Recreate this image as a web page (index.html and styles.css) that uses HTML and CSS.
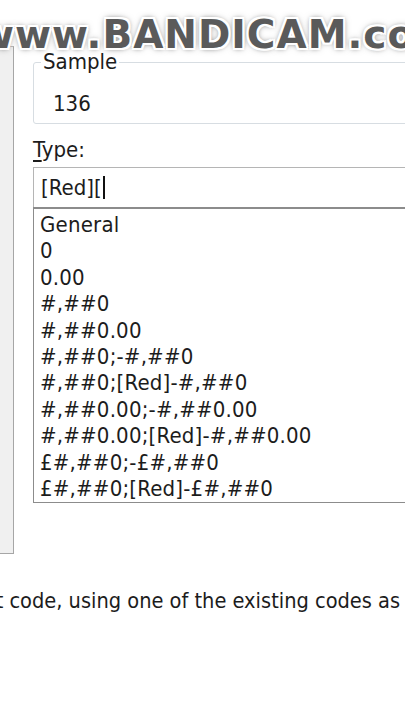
FILE: index.html
```html
<!DOCTYPE html>
<html>
<head>
<meta charset="utf-8">
<link rel="stylesheet" href="styles.css">
</head>
<body>
<div class="screen">
  <div class="dialog">
    <div class="side"></div>
    <div class="main">
      <fieldset class="sample">
        <legend>Sample</legend>
        <div class="sample-value">136</div>
      </fieldset>
      <div class="type-label"><u>T</u>ype:</div>
      <div class="type-input">[Red][<span class="caret"></span></div>
      <ul class="type-list">
        <li>General</li>
        <li>0</li>
        <li>0.00</li>
        <li>#,##0</li>
        <li>#,##0.00</li>
        <li>#,##0;-#,##0</li>
        <li>#,##0;[Red]-#,##0</li>
        <li>#,##0.00;-#,##0.00</li>
        <li>#,##0.00;[Red]-#,##0.00</li>
        <li>£#,##0;-£#,##0</li>
        <li>£#,##0;[Red]-£#,##0</li>
      </ul>
    </div>
  </div>
  <p class="hint">Type the number format code, using one of the existing codes as a starting point.</p>
  <div class="watermark">www.BANDICAM.com</div>
</div>
</body>
</html>
```
FILE: styles.css
```css
html, body {
  margin: 0;
  padding: 0;
  background: #ffffff;
}
.screen {
  position: relative;
  width: 405px;
  height: 720px;
  overflow: hidden;
  font-family: "DejaVu Sans Condensed", "DejaVu Sans", sans-serif;
  font-size: 22px;
  color: #1c1c1c;
}
.dialog {
  display: flex;
  padding-top: 46px;
}
.side {
  width: 13px;
  height: 506px;
  background: #f0f0f0;
  border-top: 1px solid #b9b9b9;
  border-right: 1px solid #a6a6a6;
  border-bottom: 1px solid #a6a6a6;
  flex: none;
}
.main {
  flex: none;
  width: 420px;
  padding-left: 19px;
}
.sample {
  margin: 6px 0 0 0;
  padding: 0 0 8px 19px;
  border: 1px solid #d7dde2;
  border-radius: 3px;
}
.sample legend {
  padding: 0 2px;
  margin-left: -12px;
  line-height: 20px;
}
.sample-value {
  margin-top: 21px;
  line-height: 22px;
}
.type-label {
  margin-top: 14px;
  line-height: 24px;
}
.type-label u {
  text-underline-offset: 3px;
}
.type-input {
  margin-top: 5px;
  height: 39px;
  border: 1px solid #b5b5b5;
  border-bottom: none;
  padding-left: 7px;
  display: flex;
  align-items: center;
}
.caret {
  display: inline-block;
  width: 2px;
  height: 23px;
  background: #111;
  margin-left: 1px;
}
.type-list {
  list-style: none;
  margin: 0;
  padding: 3px 0 0 6px;
  height: 290px;
  border-top: 2px solid #8c8c8c;
  border-left: 1px solid #8c8c8c;
  border-bottom: 1px solid #8c8c8c;
}
.type-list li {
  line-height: 26.4px;
  white-space: nowrap;
  letter-spacing: 0.2px;
}
.hint {
  margin: 34px 0 0 -232px;
  white-space: nowrap;
  line-height: 26px;
  font-size: 21.6px;
}
.watermark {
  position: absolute;
  top: 12px;
  left: -22px;
  font-family: "DejaVu Sans", sans-serif;
  font-weight: bold;
  font-size: 39px;
  letter-spacing: 1px;
  color: #5a5a5a;
  white-space: nowrap;
  text-shadow:
    -2px 0 0 #fff, 2px 0 0 #fff, 0 -2px 0 #fff, 0 2px 0 #fff,
    -2px -2px 0 #fff, 2px 2px 0 #fff, -2px 2px 0 #fff, 2px -2px 0 #fff,
    0 0 7px #7a7a7a, 0 0 4px #999;
}
```
